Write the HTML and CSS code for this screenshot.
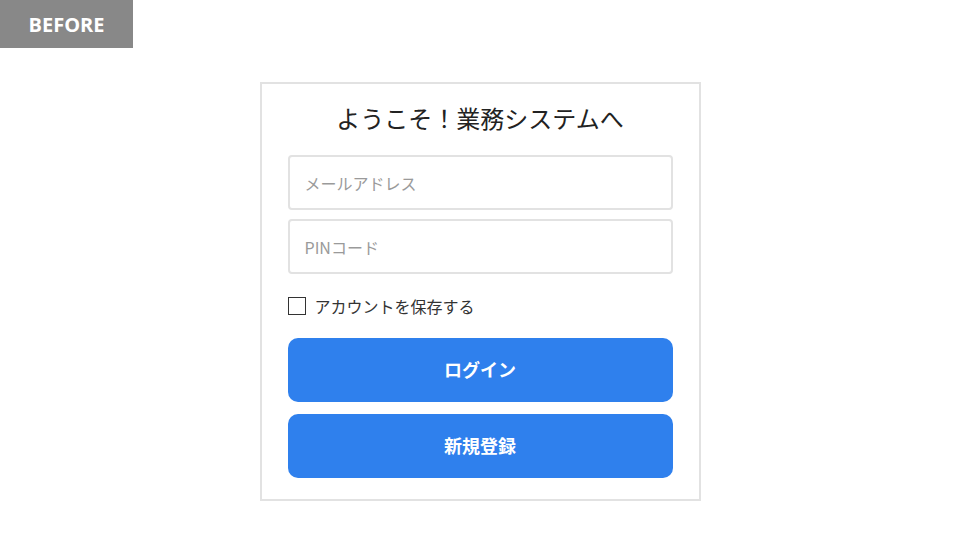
FILE: index.html
```html
<!DOCTYPE html>
<html lang="ja">
<head>
  <meta charset="UTF-8" />
  <meta name="viewport" content="width=device-width, initial-scale=1.0" />
  <title>ログイン</title>
  <link rel="stylesheet" href="styles.css">
</head>
<body>
  <div class="badge">BEFORE</div>

  <div class="page">
    <!-- Login card -->
    <form class="card" onsubmit="return false;">
      <h1>ようこそ！業務システムへ</h1>

      <input class="field" type="email" placeholder="メールアドレス" />
      <input class="field" type="password" placeholder="PINコード" />

      <label class="remember">
        <span class="box"></span>
        アカウントを保存する
      </label>

      <button class="btn" type="submit">ログイン</button>
      <button class="btn" type="button">新規登録</button>
    </form>
  </div>
</body>
</html>
```

FILE: styles.css
```css
:root {
  --accent: #2f80ed;
  --line: #e2e2e2;
}

* {
  box-sizing: border-box;
}

body {
  margin: 0;
  font-family: "Noto Sans CJK JP", "Noto Sans", sans-serif;
  color: #222;
  background: #fff;
}

/* --- BEFORE tag --- */
.badge {
  position: absolute;
  top: 0;
  left: 0;
  width: 133px;
  height: 48px;
  background: #888;
  color: #fff;
  font-family: "Open Sans", "Noto Sans", sans-serif;
  font-weight: 700;
  font-size: 20px;
  display: flex;
  align-items: center;
  justify-content: center;
}

/* --- LAYOUT --- */
.page {
  display: flex;
  justify-content: center;
  padding-top: 82px;
}

.card {
  width: 441px;
  border: 2px solid var(--line);
  padding: 17px 26px 21px;
  display: flex;
  flex-direction: column;
}

.card h1 {
  margin: 0 0 20px;
  font-size: 24px;
  font-weight: 400;
  line-height: 34px;
  text-align: center;
  color: #222;
}

/* --- INPUTS --- */
.field {
  height: 55px;
  border: 2px solid var(--line);
  border-radius: 4px;
  padding: 0 15px;
  font-family: inherit;
  font-size: 16px;
  color: #222;
  margin-bottom: 9px;
}

.field::placeholder {
  color: #9a9a9a;
}

.remember {
  display: flex;
  align-items: center;
  gap: 9px;
  margin: 11px 0 20px;
  font-size: 16px;
  line-height: 24px;
  color: #333;
}

.box {
  width: 18px;
  height: 18px;
  border: 1.5px solid #333;
}

/* --- BUTTONS --- */
.btn {
  height: 64px;
  border: 0;
  border-radius: 10px;
  background: var(--accent);
  color: #fff;
  font-family: inherit;
  font-size: 18px;
  font-weight: 700;
  padding: 0 0 3px;
  margin-bottom: 12px;
}

.btn:last-child {
  margin-bottom: 0;
}
```
